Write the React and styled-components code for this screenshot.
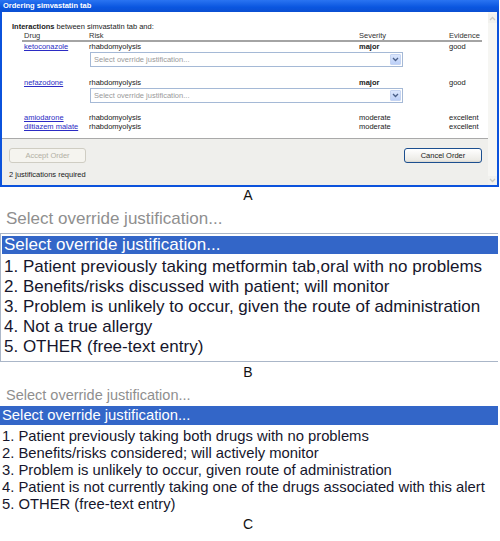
import React from 'react';
import styled, { createGlobalStyle } from 'styled-components';

const GlobalStyle = createGlobalStyle`
  html, body {
    margin: 0;
    padding: 0;
    background: #fff;
  }
  body {
    font-family: "Liberation Sans", Arial, sans-serif;
    width: 500px;
    height: 541px;
    overflow: hidden;
  }
`;

const Page = styled.div`
  display: flex;
  flex-direction: column;
  width: 500px;
`;

// panel A - the dialog
const Dialog = styled.div`
  width: 499px;
  box-sizing: border-box;
  background: #0b52dc;
  padding: 0 2px 2px 2px;
  display: flex;
  flex-direction: column;
`;

const TitleBar = styled.div`
  height: 12px;
  background: linear-gradient(#2a74f2, #0a56e0 60%, #0b4fd2);
  color: #fff;
  font-size: 7.5px;
  line-height: 12px;
  font-weight: bold;
  margin: 0 -2px;
  padding-left: 3px;
`;

const Body = styled.div`
  display: flex;
  flex-direction: row;
  height: 173px;
  background: #fff;
`;

const MainCol = styled.div`
  flex: 1;
  display: flex;
  flex-direction: column;
`;

const Content = styled.div`
  height: 126px;
  box-sizing: border-box;
  padding: 10px 0 0 10px;
  font-size: 7.5px;
  line-height: 9px;
  color: #1a1a1a;
`;

const Intro = styled.div`
  b {
    font-weight: bold;
  }
`;

const Table = styled.div`
  margin-left: 10px;
  width: 460px;
`;

const Grid = styled.div`
  display: grid;
  grid-template-columns: 65px 270px 90px 1fr;
  padding-left: 2px;
`;

const HeaderRow = styled(Grid)`
  border-bottom: 2px solid #a4a4a4;
  color: #333;
`;

const DrugRow = styled(Grid)`
  margin-bottom: ${(p) => p.$gap || 0}px;
`;

const DrugLink = styled.a`
  color: #2b2bc4;
  text-decoration: underline;
  cursor: pointer;
`;

const Severity = styled.span`
  font-weight: ${(p) => (p.$bold ? 'bold' : 'normal')};
`;

const SelectBox = styled.div`
  grid-column: 2 / span 3;
  width: 313px;
  height: 15px;
  box-sizing: border-box;
  margin: 1px 0 0 1px;
  border: 1px solid #a5b9d6;
  display: flex;
  align-items: center;
  justify-content: space-between;
  padding-left: 3px;
  color: #9a9a9a;
  background: #fff;
`;

const ArrowBtn = styled.div`
  width: 11px;
  height: 11px;
  margin-right: 1px;
  background: linear-gradient(#dbe6fd, #bcd0f8);
  border: 1px solid #c5d4f2;
  border-radius: 1px;
  box-sizing: border-box;
  display: flex;
  align-items: center;
  justify-content: center;
`;

const Separator = styled.div`
  height: 1px;
  background: #a9a9a9;
`;

const Footer = styled.div`
  flex: 1;
  background: #efefec;
  padding: 9px 6px 0 7px;
  font-size: 7.5px;
  line-height: 9px;
  color: #1a1a1a;
`;

const ButtonRow = styled.div`
  display: flex;
  justify-content: space-between;
`;

const Button = styled.div`
  width: ${(p) => p.$w}px;
  height: 15px;
  box-sizing: border-box;
  border-radius: 3px;
  display: flex;
  align-items: center;
  justify-content: center;
  font-size: 7.5px;
  border: 1px solid ${(p) => (p.$disabled ? '#cfcdc3' : '#1c4f8f')};
  color: ${(p) => (p.$disabled ? '#b2b0a4' : '#1a1a1a')};
  background: ${(p) =>
    p.$disabled ? '#f5f4ef' : 'linear-gradient(#ffffff, #ecebe6 85%, #d8d6cf)'};
`;

const Status = styled.div`
  margin-top: 7px;
`;

const ScrollBar = styled.div`
  width: 9px;
  background: #f6f6f3;
  display: flex;
  flex-direction: column;
  justify-content: space-between;
  padding: 2px 0 0 0;
`;

const ScrollArrow = styled.div`
  height: 9px;
  display: flex;
  align-items: center;
  justify-content: center;
  background: #f1f1ee;
`;

const PanelLabel = styled.div`
  text-align: center;
  width: 496px;
  font-size: 14px;
  line-height: 16px;
  color: #111;
  margin-top: ${(p) => p.$top || 0}px;
`;

// panels B and C - the dropdown lists
const Placeholder = styled.div`
  font-size: ${(p) => p.$size}px;
  line-height: ${(p) => p.$lh}px;
  color: #8f8f8f;
  padding-left: 6px;
  margin-top: ${(p) => p.$top}px;
  white-space: nowrap;
`;

const ListBox = styled.div`
  width: 498px;
  box-sizing: border-box;
  margin-top: ${(p) => p.$top}px;
  font-size: ${(p) => p.$size}px;
  color: #16162c;
  white-space: nowrap;
  ${(p) =>
    p.$framed
      ? `
    border: 1px solid #aab6c8;
    border-right: none;
    padding: 2px 0 4px 1px;
  `
      : ''}
`;

const Highlight = styled.div`
  background: #3366c8;
  color: #fff;
  line-height: ${(p) => p.$lh}px;
  padding-left: ${(p) => p.$pad}px;
  margin-bottom: 3px;
`;

const Item = styled.div`
  line-height: ${(p) => p.$lh}px;
  padding-left: ${(p) => p.$pad}px;
`;

const Chevron = ({ color = '#4a5f88', up }) => (
  <svg width="7" height="5" viewBox="0 0 7 5">
    <path
      d={up ? 'M1 4 L3.5 1.5 L6 4' : 'M1 1 L3.5 3.5 L6 1'}
      fill="none"
      stroke={color}
      strokeWidth="1.3"
    />
  </svg>
);

const interactions = [
  { drug: 'ketoconazole', risk: 'rhabdomyolysis', severity: 'major', evidence: 'good', select: true, gap: 11 },
  { drug: 'nefazodone', risk: 'rhabdomyolysis', severity: 'major', evidence: 'good', select: true, gap: 10 },
  { drug: 'amiodarone', risk: 'rhabdomyolysis', severity: 'moderate', evidence: 'excellent' },
  { drug: 'diltiazem malate', risk: 'rhabdomyolysis', severity: 'moderate', evidence: 'excellent' },
];

const listB = [
  '1. Patient previously taking metformin tab,oral with no problems',
  '2. Benefits/risks discussed with patient; will monitor',
  '3. Problem is unlikely to occur, given the route of administration',
  '4. Not a true allergy',
  '5. OTHER (free-text entry)',
];

const listC = [
  '1. Patient previously taking both drugs with no problems',
  '2. Benefits/risks considered; will actively monitor',
  '3. Problem is unlikely to occur, given route of administration',
  '4. Patient is not currently taking one of the drugs associated with this alert',
  '5. OTHER (free-text entry)',
];

const App = () => {
  return (
    <Page>
      <GlobalStyle />
      <Dialog>
        <TitleBar>Ordering simvastatin tab</TitleBar>
        <Body>
          <MainCol>
            <Content>
              <Intro>
                <b>Interactions</b> between simvastatin tab and:
              </Intro>
              <Table>
                <HeaderRow>
                  <span>Drug</span>
                  <span>Risk</span>
                  <span>Severity</span>
                  <span>Evidence</span>
                </HeaderRow>
                {interactions.map((row) => (
                  <DrugRow key={row.drug} $gap={row.gap}>
                    <span>
                      <DrugLink>{row.drug}</DrugLink>
                    </span>
                    <span>{row.risk}</span>
                    <Severity $bold={row.severity === 'major'}>{row.severity}</Severity>
                    <span>{row.evidence}</span>
                    {row.select && (
                      <SelectBox>
                        <span>Select override justification...</span>
                        <ArrowBtn>
                          <Chevron />
                        </ArrowBtn>
                      </SelectBox>
                    )}
                  </DrugRow>
                ))}
              </Table>
            </Content>
            <Separator />
            <Footer>
              <ButtonRow>
                <Button $w={77} $disabled>
                  Accept Order
                </Button>
                <Button $w={78}>Cancel Order</Button>
              </ButtonRow>
              <Status>2 justifications required</Status>
            </Footer>
          </MainCol>
          <ScrollBar>
            <ScrollArrow>
              <Chevron up color="#c9c9c4" />
            </ScrollArrow>
            <ScrollArrow>
              <Chevron color="#c9c9c4" />
            </ScrollArrow>
          </ScrollBar>
        </Body>
      </Dialog>
      <PanelLabel>A</PanelLabel>

      <Placeholder $size={17} $lh={20} $top={6}>
        Select override justification...
      </Placeholder>
      <ListBox $framed $size={17} $top={4}>
        <Highlight $lh={18} $pad={2}>
          Select override justification...
        </Highlight>
        {listB.map((t) => (
          <Item key={t} $lh={20} $pad={2}>
            {t}
          </Item>
        ))}
      </ListBox>
      <PanelLabel $top={2}>B</PanelLabel>

      <Placeholder $size={14.5} $lh={18} $top={6}>
        Select override justification...
      </Placeholder>
      <ListBox $size={14.8} $top={2}>
        <Highlight $lh={19} $pad={2}>
          Select override justification...
        </Highlight>
        {listC.map((t) => (
          <Item key={t} $lh={17} $pad={2}>
            {t}
          </Item>
        ))}
      </ListBox>
      <PanelLabel $top={3}>C</PanelLabel>
    </Page>
  );
};

export default App;
